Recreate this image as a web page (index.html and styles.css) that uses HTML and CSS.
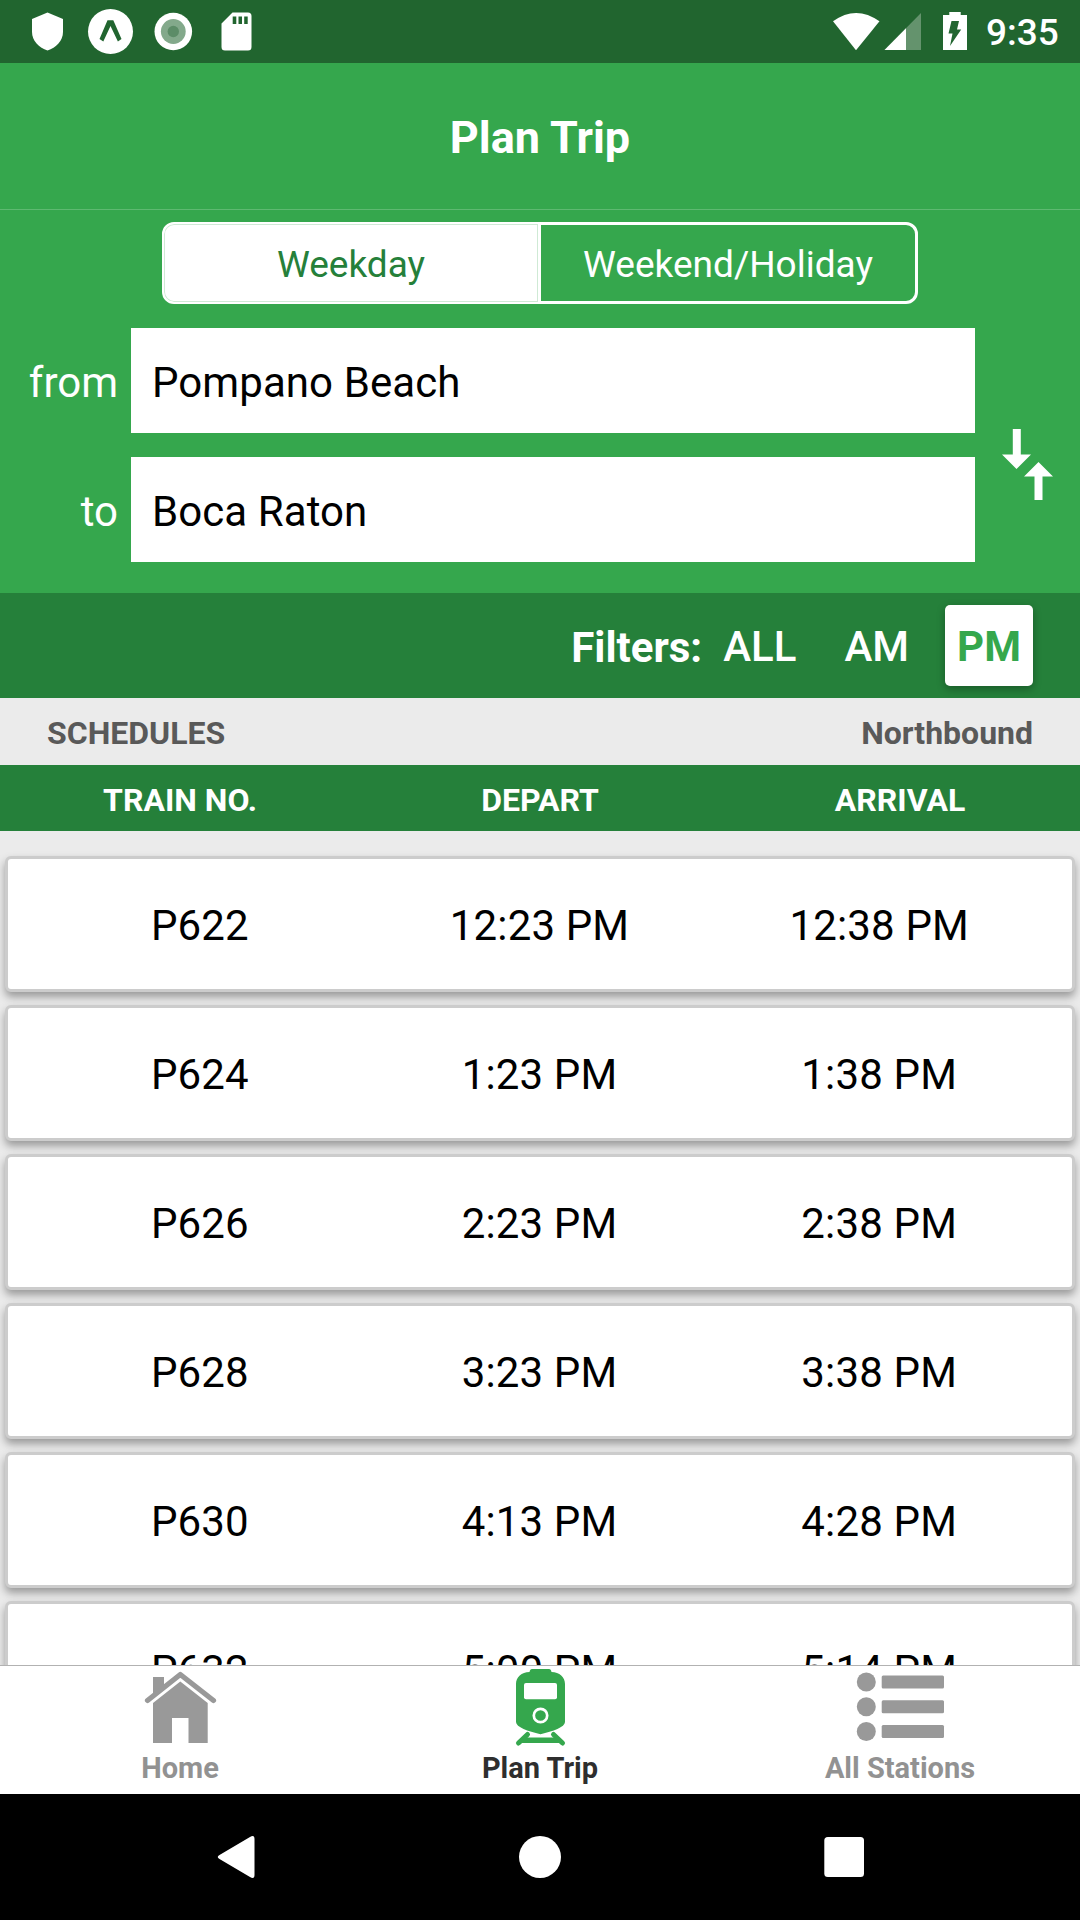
FILE: index.html
```
<!DOCTYPE html>
<html lang="en">
<head>
  <meta charset="UTF-8" />
  <meta name="viewport" content="width=device-width, initial-scale=1.0"/>
  <title>Plan Trip</title>
  <link rel="stylesheet" href="styles.css">
</head>
<body>
  <div class="app">
    <div class="status-bar">
      <svg class="status-icons" width="270" height="63" viewBox="0 0 270 63">
        <path d="M47.500 12.500L63 19V32C63 40.500 56 48 47.500 50.500C39 48 32 40.500 32 32V19Z" fill="#fff"/>
        <circle cx="110.500" cy="31.500" r="22.500" fill="#fff"/>
        <path d="M107.500 20.300h5.800l8.200 18.800-3.600 2.300-7.400-15.500-7.200 15.500-3.800-2.300z" fill="#21652f"/>
        <circle cx="173.300" cy="31.500" r="18.800" fill="#fff"/>
        <circle cx="173.300" cy="31.500" r="12.400" fill="#83a98b"/>
        <circle cx="173.300" cy="31.500" r="5.700" fill="#5c8c67"/>
        <path d="M232.500 12.500H248a3.500 3.500 0 0 1 3.500 3.500V47a3.500 3.500 0 0 1-3.500 3.500H225a3.500 3.500 0 0 1-3.500-3.500V23.500z" fill="#fff"/>
        <path d="M232.700 16.500h3.600v7.500h-3.600zM238.500 16.500h3.500v7.500h-3.500zM244.200 16.500h3.500v7.500h-3.500z" fill="#21652f"/>
      </svg>
      <div class="status-right">
        <svg width="145" height="63" viewBox="830 0 145 63">
          <path d="M833 21.300Q856 4.500 879.500 21.300L856 50.300z" fill="#fff"/>
          <path d="M884.500 50L921 13V50z" fill="#fff" fill-opacity=".3"/>
          <path d="M884.500 50L906 28.200V50z" fill="#fff"/>
          <path d="M943 15h6.300v-3h11.400v3h6.300v35h-24z" fill="#fff"/>
          <path d="M951.500 21h7.500l-2 8.500h4.200L950 46l2.500-12.500h-4z" fill="#21652f"/>
        </svg>
        <span class="time">9:35</span>
      </div>
    </div>

    <div class="header">Plan Trip</div>

    <div class="trip-form">
      <div class="day-toggle">
        <div class="day active">Weekday</div>
        <div class="day">Weekend/Holiday</div>
      </div>
      <div class="stations">
        <div class="fields">
          <label>from</label>
          <div class="field">Pompano Beach</div>
          <label>to</label>
          <div class="field">Boca Raton</div>
        </div>
        <svg class="swap" width="52" height="72" viewBox="0 0 52 72">
          <path d="M10.800 0h8v25.500h10.200L14.500 40 0 25.500h10.800z" fill="#fff"/>
          <path d="M36.500 33L51 47.500H40.500V71h-8V47.500H22z" fill="#fff"/>
        </svg>
      </div>
    </div>

    <div class="filters">
      <span class="filters-label">Filters:</span>
      <span class="filter filter-all">ALL</span>
      <span class="filter filter-am">AM</span>
      <span class="filter selected">PM</span>
    </div>

    <div class="schedule-title"><span>SCHEDULES</span><span>Northbound</span></div>
    <div class="table-head"><span>TRAIN NO.</span><span>DEPART</span><span>ARRIVAL</span></div>

    <div class="list">
      <div class="train"><span>P622</span><span>12:23 PM</span><span>12:38 PM</span></div>
      <div class="train"><span>P624</span><span>1:23 PM</span><span>1:38 PM</span></div>
      <div class="train"><span>P626</span><span>2:23 PM</span><span>2:38 PM</span></div>
      <div class="train"><span>P628</span><span>3:23 PM</span><span>3:38 PM</span></div>
      <div class="train"><span>P630</span><span>4:13 PM</span><span>4:28 PM</span></div>
      <div class="train"><span>P632</span><span>5:00 PM</span><span>5:14 PM</span></div>
    </div>

    <div class="tabs">
      <div class="tab">
        <svg width="90" height="80" viewBox="135 1667 90 80">
          <path d="M153 1677h11v10l-11 9z" fill="#999"/>
          <path d="M147.500 1700.500L180.300 1674.500L213.500 1700.500" fill="none" stroke="#999" stroke-width="5.200" stroke-linecap="round" stroke-linejoin="round"/>
          <path d="M153 1703L180.300 1681.500L207.700 1703V1743H188.500V1718H172V1743H153z" fill="#999"/>
        </svg>
        <span>Home</span>
      </div>
      <div class="tab current">
        <svg width="90" height="80" viewBox="495 1667 90 80">
          <path d="M532 1669h17q2 0 2.500 3c8 0 13.500 5 13.500 12v38c0 5-12 9.500-24.500 12.200C528 1731.500 516 1727 516 1722v-38c0-7 5.500-12 13.500-12q.5-3 2.500-3z" fill="#35a74d"/>
          <rect x="524" y="1683" width="33" height="16.300" rx="2" fill="#fff"/>
          <circle cx="540.500" cy="1715.500" r="6.700" fill="none" stroke="#fff" stroke-width="2.700"/>
          <path d="M527.500 1734.500L518.500 1743M553.500 1734.500L562.500 1743" stroke="#35a74d" stroke-width="5" stroke-linecap="round"/>
          <path d="M525 1737.500h31l5 5.500h-41z" fill="#35a74d"/>
        </svg>
        <span>Plan Trip</span>
      </div>
      <div class="tab">
        <svg width="90" height="80" viewBox="855 1667 90 80">
          <g fill="#999">
            <circle cx="866.300" cy="1682" r="9.500"/>
            <circle cx="866.300" cy="1706.700" r="9.500"/>
            <circle cx="866.300" cy="1731.500" r="9.500"/>
            <rect x="881.700" y="1675.500" width="62.300" height="13" rx="1.500"/>
            <rect x="881.700" y="1700.300" width="62.300" height="13" rx="1.500"/>
            <rect x="881.700" y="1725" width="62.300" height="13" rx="1.500"/>
          </g>
        </svg>
        <span>All Stations</span>
      </div>
    </div>

    <div class="nav-bar">
      <svg width="1080" height="126" viewBox="0 1794 1080 126">
        <path d="M219.500 1855L250 1837Q254.500 1834.500 254.500 1839V1875Q254.500 1879.500 250 1877L219.500 1859Q216 1857 219.500 1855z" fill="#fff"/>
        <circle cx="540" cy="1857" r="21" fill="#fff"/>
        <rect x="824.300" y="1837" width="39.700" height="40" rx="3.500" fill="#fff"/>
      </svg>
    </div>
  </div>
</body>
</html>
```
FILE: styles.css
```
* {
  box-sizing: border-box;
}
body {
  margin: 0;
  background: #ebebeb;
  font-family: Roboto, Arial, sans-serif;
}
svg {
  display: block;
}
.app {
  width: 1080px;
  height: 1920px;
  display: flex;
  flex-direction: column;
  overflow: hidden;
}
.status-bar {
  height: 63px;
  flex: none;
  background: #21652f;
  display: flex;
  justify-content: space-between;
}
.status-right {
  display: flex;
  width: 250px;
  gap: 11px;
}
.time {
  font-size: 37px;
  font-weight: 500;
  line-height: 66px;
  color: #fff;
}
.header {
  height: 147px;
  flex: none;
  background: #35a74d;
  border-bottom: 1px solid #5eb971;
  color: #fff;
  font-size: 45px;
  font-weight: 700;
  line-height: 150px;
  text-align: center;
}

/* day switch + station pickers */
.trip-form {
  height: 383px;
  flex: none;
  background: #35a74d;
  padding-top: 12px;
}
.day-toggle {
  width: 756px;
  height: 82px;
  margin: 0 auto 24px;
  display: flex;
}
.day {
  flex: 1;
  border: 3px solid #fff;
  border-left-width: 1px;
  border-radius: 0 12px 12px 0;
  color: #fff;
  font-size: 37px;
  line-height: 80px;
  text-align: center;
}
.day.active {
  border: 2px solid #fff;
  border-radius: 12px 0 0 12px;
  background: #fff;
  box-shadow: inset 0 0 0 1px #cfead5;
  color: #25803a;
  line-height: 82px;
}
.stations {
  display: flex;
}
.fields {
  width: 975px;
  display: grid;
  grid-template-columns: 118px 844px;
  column-gap: 13px;
  row-gap: 24px;
}
.fields label {
  color: #fff;
  font-size: 42px;
  line-height: 109px;
  height: 105px;
  text-align: right;
}
.field {
  height: 105px;
  padding-left: 21px;
  background: #fff;
  color: #000;
  font-size: 42px;
  letter-spacing: 0.080px;
  line-height: 110px;
}
.swap {
  margin: 101px 0 0 27px;
}

.filters {
  height: 105px;
  flex: none;
  padding-right: 47px;
  background: #25803a;
  color: #fff;
  font-size: 42px;
  display: flex;
  justify-content: flex-end;
  align-items: center;
}
.filters-label {
  font-weight: 700;
  margin-right: 21px;
  padding-top: 3px;
}
.filter {
  font-weight: 500;
  padding-top: 2px;
}
.filter-all {
  margin-right: 48px;
}
.filter-am {
  margin-right: 36px;
}
.filter.selected {
  width: 88px;
  height: 81px;
  padding-top: 0;
  border-radius: 5px;
  background: #fff;
  box-shadow: 0 3px 8px rgba(0, 0, 0, 0.3);
  color: #35a74d;
  font-weight: 700;
  line-height: 84px;
  text-align: center;
}
.schedule-title {
  height: 67px;
  flex: none;
  padding: 0 47px;
  background: #ebebeb;
  color: #595959;
  font-size: 32px;
  font-weight: 700;
  line-height: 71px;
  display: flex;
  justify-content: space-between;
}
.table-head {
  height: 66px;
  flex: none;
  background: #25803a;
  color: #fff;
  font-size: 32px;
  font-weight: 700;
  line-height: 71px;
  text-align: center;
  display: flex;
}
.table-head span,
.train span {
  flex: 1;
}

.list {
  height: 834px;
  flex: none;
  padding: 25px 5px 0;
  overflow: hidden;
}
.train {
  height: 136px;
  margin-bottom: 13px;
  padding: 0 23px 0 22px;
  border: 3px solid #ccc;
  border-radius: 6px;
  background: #fff;
  box-shadow: 0 5px 8px rgba(0, 0, 0, 0.35);
  color: #000;
  font-size: 42px;
  letter-spacing: 0.150px;
  line-height: 133px;
  text-align: center;
  display: flex;
}

.tabs {
  height: 129px;
  flex: none;
  border-top: 1px solid #b2b2b2;
  background: #fff;
  display: flex;
}
.tab {
  flex: 1;
  display: flex;
  flex-direction: column;
  align-items: center;
  padding-top: 1px;
  color: #929292;
  font-size: 29px;
  font-weight: 700;
  line-height: 42px;
}
.tab.current {
  color: #2e2e2e;
}
.nav-bar {
  height: 126px;
  flex: none;
  background: #000;
}
```
